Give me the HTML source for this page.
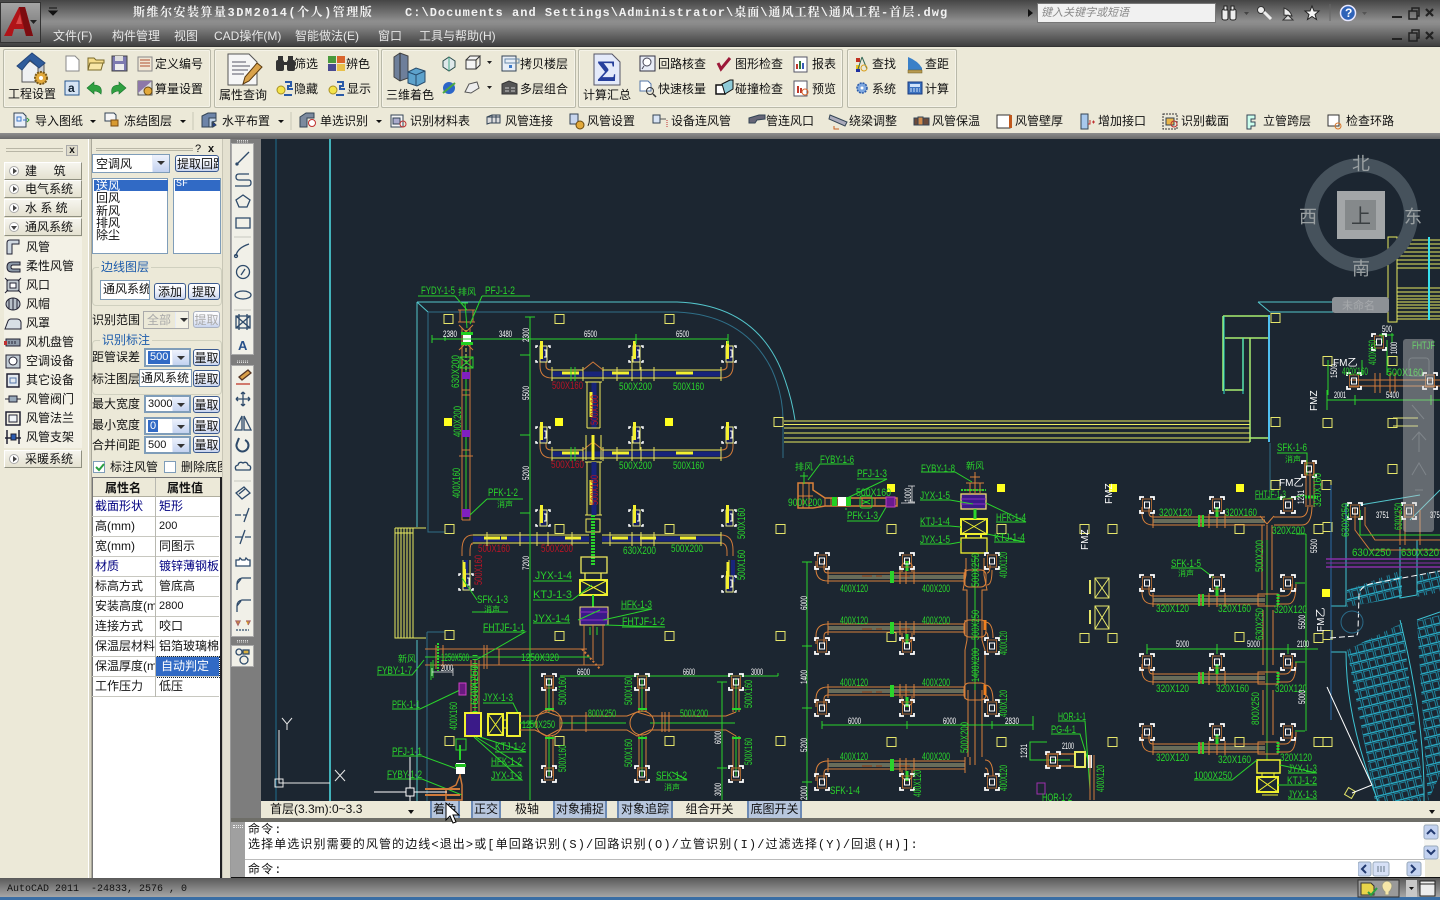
<!DOCTYPE html>
<html><head><meta charset="utf-8"><title>斯维尔安装算量</title>
<style>
html,body{margin:0;padding:0;width:1440px;height:900px;overflow:hidden;background:#ece9d8}
body{position:relative;font:12px/14px "Liberation Sans","WenQuanYi Zen Hei","Noto Sans CJK SC",sans-serif;color:#111}
div,span,i{position:absolute;display:block;box-sizing:border-box}
.t{white-space:nowrap;height:14px}
.m{color:#e6e6e6}
.p{top:49px;height:59px;border:1px solid #b9b9a9;box-shadow:inset 0 0 0 1px #f5f3e8;border-radius:2px}
.lb{left:4px;width:78px;height:18px;background:linear-gradient(#f6f5ee,#e4e1d0);border:1px solid;border-color:#fff #8f8f80 #8f8f80 #fff;padding:1px 0 0 20px;white-space:nowrap}
.lb i{left:4px;top:3px;width:10px;height:10px;border-radius:50%;background:#fff;border:1px solid #aaa}
.lb i:after{content:"";position:absolute;left:3px;top:1px;border-left:4px solid #444;border-top:3px solid transparent;border-bottom:3px solid transparent}
.lb.o i:after{left:1px;top:3px;border-top:4px solid #444;border-left:3px solid transparent;border-right:3px solid transparent;border-bottom:0}
.b{background:linear-gradient(#fff,#ebeef8 55%,#c9d4ee);border:1px solid #3b5a8f;border-radius:3px;text-align:center;overflow:hidden;white-space:nowrap;padding-top:1px}
.b.d{color:#aaa;border-color:#aab2c0}
.c{background:#fff;border:2px solid #7f9db9;overflow:hidden;white-space:nowrap;padding:0 0 0 2px;line-height:14px;font-size:11px}
.c u{position:absolute;right:0;top:0;bottom:0;width:16px;background:linear-gradient(#eef2fc,#c3d2f0);border-left:1px solid #e5ebf8;text-decoration:none}
.c u:after{content:"";position:absolute;left:4px;top:6px;border-top:4px solid #333;border-left:4px solid transparent;border-right:4px solid transparent}
.sel{background:#316ac5;color:#fff}
.gt{height:20px;border-bottom:1px solid #c8c8c0;white-space:nowrap;overflow:hidden;padding:2px 0 0 3px;left:92px;width:63px;font-size:12px}
.gv{height:20px;border-bottom:1px solid #c8c8c0;white-space:nowrap;overflow:hidden;padding:2px 0 0 3px;left:156px;width:63px;font-size:12px}
.tab{top:801px;height:17px;white-space:nowrap;text-align:center;padding-top:1px}
.tab.on{background:#b7c6dd;border-left:2px solid #6c8ab5;border-right:2px solid #6c8ab5}
svg{position:absolute;left:0;top:0;display:block}
svg text{font-family:"Liberation Sans","WenQuanYi Zen Hei","Noto Sans CJK SC",sans-serif;font-size:11px}
.g{fill:#2ad42c}.w{fill:#fff}.r{fill:#b81426}
.gc{fill:#2ad42c;font-size:9px!important}
</style></head><body>

<!-- title bar -->
<div style="left:0;top:0;width:1440px;height:47px;background:linear-gradient(#454545,#8f8f8f 45%,#8a8a8a 52%,#3c3c3c)"></div>
<div style="left:0;top:2px;width:41px;height:41px;background:linear-gradient(#a4a4a4,#6a6a6a);border:1px solid #333"></div>
<svg width="60" height="47" style="left:0;top:0"><path d="M4,36 L19,7 L25,7 L33,36 L26,36 L24,29 L14,29 L12,36Z" fill="#b01418"/><path d="M19,7L25,7 L33,36 L26,36Z" fill="#7d0c10"/><path d="M16,24L22,24L20,14Z" fill="#d84848"/><path d="M30,20h7l-3.500,4z" fill="#222"/><path d="M49,8h8M49,11h8l-4,4z" stroke="#111" fill="#111"/></svg>
<div class="t" style="left:133px;top:6px;color:#f2f2f2;font:bold 12px/15px 'Liberation Mono','Noto Serif CJK SC',monospace;letter-spacing:1.5px">斯维尔安装算量3DM2014(个人)管理版</div>
<div class="t" style="left:405px;top:6px;color:#f2f2f2;font:bold 12px/15px 'Liberation Mono','Noto Serif CJK SC',monospace;letter-spacing:1.03px">C:\Documents and Settings\Administrator\桌面\通风工程\通风工程-首层.dwg</div>
<div class="t m" style="left:53px;top:29px">文件(F)</div>
<div class="t m" style="left:112px;top:29px">构件管理</div>
<div class="t m" style="left:174px;top:29px">视图</div>
<div class="t m" style="left:214px;top:29px">CAD操作(M)</div>
<div class="t m" style="left:295px;top:29px">智能做法(E)</div>
<div class="t m" style="left:378px;top:29px">窗口</div>
<div class="t m" style="left:419px;top:29px">工具与帮助(H)</div>
<div style="left:1037px;top:3px;width:179px;height:20px;background:#f1f1f1;border:1px solid #777"></div>
<div class="t" style="left:1041px;top:6px;color:#8a8a8a;font-style:italic;font-size:11px">键入关键字或短语</div>

<svg width="1440" height="47"><g>
<path d="M1028,9l5,4l-5,4z" fill="#111"/>
<g fill="#eee" stroke="#222"><rect x="1222" y="9" width="6" height="11" rx="2"/><rect x="1230" y="9" width="6" height="11" rx="2"/><rect x="1224" y="6" width="3" height="4"/><rect x="1231" y="6" width="3" height="4"/></g>
<path d="M1244,12h5l-2.500,3z" fill="#444"/>
<circle cx="1261" cy="10" r="3.500" fill="#eee" stroke="#333"/><path d="M1264,12l7,7" stroke="#eee" stroke-width="3"/>
<path d="M1284,8q6,2 8,8l-8,-1z" fill="#eee" stroke="#333"/><path d="M1283,20h10l-5,-5z" fill="#ddd" stroke="#333"/>
<path d="M1312,6l2,5h5l-4,3.500 1.500,5 -4.500,-3 -4.500,3 1.500,-5 -4,-3.500h5z" fill="#f4f4f4" stroke="#222"/>
<path d="M1330,4v17" stroke="#666"/>
<circle cx="1348" cy="13" r="7.500" fill="#2f63b8" stroke="#e8e8ff" stroke-width="1.500"/>
<text x="1345" y="17" fill="#fff" style="font-size:12px;font-weight:bold">?</text>
<path d="M1362,12h5l-2.500,3z" fill="#555"/>
<g stroke="#222" fill="none" stroke-width="1.500"><path d="M1392,17h10" stroke-width="2"/><path d="M1409,11h8v8h-8zM1412,11v-3h7v8h-2"/><path d="M1426,9l7,7M1433,9l-7,7" stroke-width="2.200"/>
<path d="M1392,39h10" stroke-width="2"/><path d="M1409,33h8v8h-8zM1412,33v-3h7v8h-2"/><path d="M1426,32l7,7M1433,32l-7,7" stroke-width="2.200"/></g>
</g></svg>

<!-- ribbon -->
<div style="left:0;top:47px;width:1440px;height:86px;background:#ece9d8"></div>
<div style="left:0;top:46px;width:1440px;height:1px;background:#333"></div>
<div class="p" style="left:3px;width:208px"></div>
<div class="p" style="left:214px;width:165px"></div>
<div class="p" style="left:381px;width:195px"></div>
<div class="p" style="left:578px;width:265px"></div>
<div class="p" style="left:847px;width:110px"></div>
<div style="left:0;top:133px;width:1440px;height:6px;background:linear-gradient(#8e8e8e,#6a6a6a)"></div>

<div class="t" style="left:8px;top:87px">工程设置</div>
<div class="t" style="left:155px;top:57px">定义编号</div>
<div class="t" style="left:155px;top:82px">算量设置</div>
<div class="t" style="left:219px;top:88px">属性查询</div>
<div class="t" style="left:294px;top:57px">筛选</div>
<div class="t" style="left:346px;top:57px">辨色</div>
<div class="t" style="left:294px;top:82px">隐藏</div>
<div class="t" style="left:347px;top:82px">显示</div>
<div class="t" style="left:386px;top:88px">三维着色</div>
<div class="t" style="left:520px;top:57px">拷贝楼层</div>
<div class="t" style="left:520px;top:82px">多层组合</div>
<div class="t" style="left:583px;top:88px">计算汇总</div>
<div class="t" style="left:658px;top:57px">回路核查</div>
<div class="t" style="left:658px;top:82px">快速核量</div>
<div class="t" style="left:735px;top:57px">图形检查</div>
<div class="t" style="left:735px;top:82px">碰撞检查</div>
<div class="t" style="left:812px;top:57px">报表</div>
<div class="t" style="left:812px;top:82px">预览</div>
<div class="t" style="left:872px;top:57px">查找</div>
<div class="t" style="left:925px;top:57px">查距</div>
<div class="t" style="left:872px;top:82px">系统</div>
<div class="t" style="left:925px;top:82px">计算</div>

<div class="t" style="left:35px;top:114px">导入图纸</div>
<div class="t" style="left:124px;top:114px">冻结图层</div>
<div class="t" style="left:222px;top:114px">水平布置</div>
<div class="t" style="left:320px;top:114px">单选识别</div>
<div class="t" style="left:410px;top:114px">识别材料表</div>
<div class="t" style="left:505px;top:114px">风管连接</div>
<div class="t" style="left:587px;top:114px">风管设置</div>
<div class="t" style="left:671px;top:114px">设备连风管</div>
<div class="t" style="left:766px;top:114px">管连风口</div>
<div class="t" style="left:849px;top:114px">绕梁调整</div>
<div class="t" style="left:932px;top:114px">风管保温</div>
<div class="t" style="left:1015px;top:114px">风管壁厚</div>
<div class="t" style="left:1098px;top:114px">增加接口</div>
<div class="t" style="left:1181px;top:114px">识别截面</div>
<div class="t" style="left:1263px;top:114px">立管跨层</div>
<div class="t" style="left:1346px;top:114px">检查环路</div>

<svg width="1440" height="139" style="top:0">
<!-- house -->
<path d="M22,68L30,61L38,67V82H22Z" fill="#eef0f2" stroke="#555"/><path d="M38,67L44,63V78L38,82Z" fill="#c8ccd2" stroke="#555"/><path d="M17,66L32,53L45,63L39,68L30,60L22,70Z" fill="#2f5c9c" stroke="#24467a"/><circle cx="41" cy="78" r="6" fill="#e2a93a" stroke="#7a5a1a" stroke-width="2" stroke-dasharray="2 1"/><circle cx="41" cy="78" r="2" fill="#fff"/>
<!-- small -->
<path d="M66,56h9l4,4v11h-13z" fill="#fff" stroke="#888"/>
<path d="M88,58h6l2,2h8v3h-14l-2,7v-12z" fill="#f5dc8a" stroke="#7a6a2a"/><path d="M90,63h13l-2,7h-13z" fill="#f8e6a6" stroke="#7a6a2a"/>
<rect x="112" y="56" width="15" height="15" fill="#7d7ab0" stroke="#444"/><rect x="115" y="56" width="8" height="5" fill="#ddd"/><rect x="115" y="64" width="9" height="6" fill="#eee"/>
<rect x="138" y="57" width="14" height="14" fill="#f0e6d4" stroke="#888"/><path d="M140,60h10M140,63h10M140,66h10" stroke="#b05030"/>
<rect x="65" y="81" width="14" height="14" fill="#d6e4f4" stroke="#27578f"/><text x="68" y="92" fill="#123" style="font-size:12px;font-weight:bold">a</text>
<path d="M101,94q2,-9 -7,-9v-3l-7,6 7,6v-3q4,0 7,3z" fill="#2fa040" stroke="#14702a" stroke-width=".6"/>
<path d="M112,94q-2,-9 7,-9v-3l7,6 -7,6v-3q-4,0 -7,3z" fill="#2fa040" stroke="#14702a" stroke-width=".6"/>
<rect x="138" y="81" width="14" height="14" fill="#ddd" stroke="#555"/><path d="M138,81h14l-14,12z" fill="#8d78a8"/><circle cx="148" cy="91" r="4" fill="#e2a93a" stroke="#6a4a10"/>
<!-- prop doc -->
<path d="M228,54h21l8,8v23h-29z" fill="#f6f6f6" stroke="#555"/><path d="M232,62h14M232,66h18M232,70h16M232,74h12" stroke="#556"/><path d="M243,84l2,-7 12,-14 5,4 -13,14z" fill="#d9a24a" stroke="#5a3a10"/>
<!-- binoc etc -->
<g fill="#333"><rect x="276" y="60" width="8" height="11" rx="2"/><rect x="287" y="60" width="8" height="11" rx="2"/><rect x="278" y="56" width="5" height="5"/><rect x="288" y="56" width="5" height="5"/><rect x="283" y="62" width="5" height="3"/></g>
<rect x="328" y="56" width="8" height="7" fill="#4a9a3c"/><rect x="337" y="56" width="8" height="7" fill="#d9652c"/><rect x="328" y="64" width="8" height="7" fill="#4a4a90"/><rect x="337" y="64" width="8" height="7" fill="#e8c04a"/>
<g id="bu"><circle cx="281" cy="90" r="4" fill="#f3e34a" stroke="#a89020"/><path d="M285,82h6v4h-3v3h5M284,95h8" stroke="#2a5aa8" stroke-width="2" fill="none"/></g>
<use href="#bu" x="52"/>
<!-- 3d -->
<path d="M394,57l6,-4 8,3v22l-8,3 -6,-4z" fill="#6e7f9a" stroke="#444"/><path d="M400,53v28" stroke="#333"/><path d="M408,72l8,-4 9,3v11l-8,4 -9,-3z" fill="#5da2cc" stroke="#264a6a"/><path d="M416,75v11M408,72l8,3 9,-4" stroke="#264a6a" fill="none"/>
<path d="M449,57l6,4v6l-6,4 -6,-4v-6z" fill="#dfe8ea" stroke="#2a4a4a"/><path d="M449,57v14" stroke="#4a8"/>
<path d="M466,60h10v9h-10zM466,60l4,-4h10l-4,4M476,69l4,-4v-9" fill="#f4f4f4" stroke="#333"/>
<path d="M487,61h5l-2.500,3zM487,86h5l-2.500,3z" fill="#222"/>
<circle cx="449" cy="88" r="6" fill="#2c66c8"/><path d="M443,93l12,-10" stroke="#4ca840" stroke-width="2"/>
<path d="M465,92l4,-8 8,-2 2,6 -8,5z" fill="#eee" stroke="#555"/>
<rect x="502" y="56" width="14" height="15" fill="#e8eef6" stroke="#345"/><rect x="505" y="59" width="14" height="4" fill="none" stroke="#68a"/><rect x="509" y="65" width="3" height="3" fill="#3a78c8"/>
<path d="M502,84l7,-3 8,3v10h-15z" fill="#555" stroke="#333"/><path d="M505,88h4M511,88h4M505,91h4M511,91h4" stroke="#ccc"/>
<!-- sigma -->
<path d="M594,54h18l8,8v23h-26z" fill="#e4eafa" stroke="#556"/><text x="597" y="81" fill="#263f9c" style="font-size:30px;font-weight:bold;font-family:'Liberation Serif',serif">Σ</text>
<rect x="640" y="56" width="15" height="15" fill="#e8ecf6" stroke="#334"/><circle cx="647" cy="62" r="4" fill="#fff" stroke="#445"/><path d="M644,66l-2,3" stroke="#445"/>
<path d="M640,81h8l3,3v7h-11z" fill="#fff" stroke="#57a"/><circle cx="650" cy="91" r="3.500" fill="none" stroke="#333"/><path d="M653,94l3,3" stroke="#333" stroke-width="1.500"/>
<path d="M718,63l3,6 9,-11" fill="none" stroke="#9c1838" stroke-width="3"/>
<path d="M716,85h9v9h-9z" fill="#fff" stroke="#111" stroke-width="1.500"/><path d="M722,84l8,-4h3v9l-8,5z" fill="#8ecbd8" stroke="#111"/>
<path d="M794,57h13v15h-13z" fill="#fff" stroke="#556"/><path d="M797,69v-5M800,69v-8M803,69v-6" stroke-width="2" stroke="#c0392b"/><path d="M800,69v-8" stroke="#2e7a3c" stroke-width="2"/><path d="M803,69v-6" stroke="#3a5cb8" stroke-width="2"/>
<path d="M794,81h13v15h-13z" fill="#fff" stroke="#556"/><path d="M798,93v-7M801,93v-5" stroke="#c0392b" stroke-width="2"/><circle cx="805" cy="92" r="3" fill="none" stroke="#d9652c"/>
<!-- find -->
<path d="M856,58h4v4h-4z" fill="#c03020"/><path d="M856,65h4v4h-4z" fill="#e8c020"/><path d="M856,69h4v3h-4z" fill="#2030a0"/><path d="M862,57l5,12M862,57l-4,12" stroke="#365" fill="none"/><circle cx="864" cy="68" r="3" fill="none" stroke="#d9a020"/>
<path d="M908,57q10,4 14,11v2h-14z" fill="#3a80c8"/><rect x="908" y="70" width="14" height="3" fill="#b89a50" stroke="#6a5a20" stroke-width=".5"/>
<circle cx="862" cy="88" r="5" fill="#7da7e0" stroke="#2a5aa8" stroke-width="1.500" stroke-dasharray="2 1"/><circle cx="862" cy="88" r="1.500" fill="#fff"/>
<rect x="908" y="82" width="14" height="12" fill="#3b72c0" stroke="#1a3a80"/><rect x="910" y="84" width="10" height="3" fill="#cfe2fa"/><path d="M910,89h10M910,91h10" stroke="#cfe2fa" stroke-dasharray="2 1"/>
<!-- toolbar icons -->
<g fill="none" stroke="#345">
<path d="M14,113h9l3,3v11h-12z" fill="#e8eef8"/><path d="M17,117h4v4h-4zM23,120h4" stroke="#3a78c8"/><path d="M27,118l2,2 -2,2" stroke="#2a9a3c"/>
<path d="M105,113h9l2,2v6h-11z" fill="#f6f6f6"/><rect x="111" y="120" width="7" height="6" fill="#d89a30" stroke="#7a4a10"/>
<path d="M202,116l6,-3h8v5h-7v9h-7z" fill="#6d84a8"/><path d="M209,118h7v3l-4,1 0,5h-3z" fill="#c0d2e8"/><path d="M216,125l-3,-3v5z" fill="#1a3ab0"/>
<path d="M300,117l6,-4h8v5h-7v9h-7z" fill="#7c8a9e"/><circle cx="312" cy="123" r="3.500" fill="#fff" stroke="#c03030"/>
<path d="M391,115h12v12h-12z" fill="#f5f5f5"/><path d="M393,118h7v6h-7z" fill="#aac" /><circle cx="403" cy="124" r="3" fill="none" stroke="#c03030"/>
<path d="M487,117l5,-2h8v8h-10l-3,1z" fill="#ddd"/><path d="M492,115v8M496,115v8M487,117h13" />
<path d="M570,114h8v10h-8z" fill="#c8d6ee"/><circle cx="580" cy="125" r="4" fill="#e2a93a" stroke="#6a4a10"/>
<path d="M653,115h7v8h-7z" fill="#d8e4f4"/><path d="M660,119h6" stroke="#555"/><path d="M667,120v8" stroke="#c03030" stroke-dasharray="1 1"/>
<path d="M749,118l10,-3h6v4l-8,1 -2,3 -6,0z" fill="#667"/>
<path d="M830,115l17,7-2,4 -16,-7z" fill="#aab"/><path d="M834,126v3h5" stroke="#c86020"/>
<path d="M914,118h15v7h-15z" fill="#6b4a3a"/><rect x="918" y="117" width="5" height="8" fill="#d08a4a"/>
<rect x="997" y="115" width="13" height="13" fill="#fff" stroke="#333"/><rect x="1009" y="115" width="3" height="13" fill="#c0581c" stroke="none"/>
<rect x="1081" y="114" width="7" height="15" fill="#a8c8ec"/><path d="M1090,120v4h-2M1092,122h3M1093.500,120.500v3" stroke="#c03030"/>
<rect x="1163" y="114" width="14" height="15" stroke-dasharray="2 1" stroke="#333"/><rect x="1166" y="118" width="8" height="7" fill="#e8b64a"/><circle cx="1174" cy="124" r="3" stroke="#c03030"/>
<path d="M1247,115h8v4h-4v3h4v4h-4v3h-4z" fill="#cfe"/>
<rect x="1328" y="115" width="11" height="11" fill="#fff" stroke="#333"/><circle cx="1338" cy="126" r="3" stroke="#d9782c"/>
</g>
<path d="M90,120h6l-3,3zM180,120h6l-3,3zM278,120h6l-3,3zM376,120h6l-3,3z" fill="#111"/>
<path d="M193,112v18M291,112v18" stroke="#c8c6b6"/>
</svg>

<!-- left panel -->
<div style="left:0;top:139px;width:88px;height:739px;background:#ece9d8"></div>
<div style="left:88px;top:139px;width:4px;height:739px;background:#d8d5c4;border-left:1px solid #fff;border-right:1px solid #aaa89a"></div>
<div style="left:6px;top:148px;width:57px;height:1px;background:#b8b6a6;box-shadow:0 3px 0 #b8b6a6"></div>
<div style="left:66px;top:145px;width:12px;height:11px;background:#dfdccc;border:1px solid #aaa;font:bold 10px/9px 'Liberation Sans';text-align:center">x</div>
<div class="lb" style="top:162px"><i></i>建 &nbsp; &nbsp; 筑</div>
<div class="lb" style="top:180px"><i></i>电气系统</div>
<div class="lb" style="top:199px"><i></i>水 系 统</div>
<div class="lb o" style="top:218px"><i></i>通风系统</div>
<div style="left:4px;top:237px;width:78px;height:211px;background:#f3f1e6"></div>
<div class="t" style="left:26px;top:240px">风管</div>
<div class="t" style="left:26px;top:259px">柔性风管</div>
<div class="t" style="left:26px;top:278px">风口</div>
<div class="t" style="left:26px;top:297px">风帽</div>
<div class="t" style="left:26px;top:316px">风罩</div>
<div class="t" style="left:26px;top:335px">风机盘管</div>
<div class="t" style="left:26px;top:354px">空调设备</div>
<div class="t" style="left:26px;top:373px">其它设备</div>
<div class="t" style="left:26px;top:392px">风管阀门</div>
<div class="t" style="left:26px;top:411px">风管法兰</div>
<div class="t" style="left:26px;top:430px">风管支架</div>
<div class="lb" style="top:450px"><i></i>采暖系统</div>
<svg width="30" height="460" style="left:0;top:0"><g fill="none" stroke="#223">
<path d="M7,254v-11q0,-3 3,-3h9v4h-7v10z" fill="#cfd8e0"/>
<path d="M20,262h-8q-5,0 -5,5t5,5h8v-3h-7q-2,0 -2,-2t2,-2h7z" fill="#8d9aa8"/>
<rect x="7" y="280" width="12" height="11" fill="#c4ccd2"/><rect x="10" y="283" width="6" height="5" fill="#fff"/><path d="M5,278l3,3M21,278l-3,3M5,293l3,-3M21,293l-3,-3"/>
<ellipse cx="13" cy="304" rx="7" ry="6" fill="#b8c0c8"/><path d="M9,299v10M13,298v12M17,299v10"/>
<path d="M5,329l3,-8q1,-2 3,-2h6q3,0 4,3v7z" fill="#d8dfe6"/>
<rect x="6" y="339" width="14" height="7" fill="#8e9aa8"/><path d="M9,341v3M12,341v3M15,341v3"/><rect x="4" y="341" width="3" height="4" fill="#c03030" stroke="none"/>
<rect x="6" y="355" width="14" height="13" fill="#c4ced6"/><circle cx="13" cy="361" r="4" fill="#fff"/>
<rect x="7" y="374" width="12" height="13" fill="#e4eaf0" stroke-width="1.500"/><rect x="10" y="378" width="6" height="5" stroke="#57a"/>
<path d="M5,399h4M17,399h4"/><rect x="9" y="396" width="8" height="6" fill="#9ab"/>
<rect x="6" y="412" width="14" height="13" stroke-width="1.500"/><rect x="9" y="415" width="8" height="7" fill="#f0f4f8"/>
<path d="M7,430v14M19,430v14M5,438h16" stroke-width="1.500"/><rect x="11" y="434" width="5" height="6" fill="#2a5ab0"/>
</g></svg>

<!-- property panel -->
<div style="left:92px;top:139px;width:130px;height:739px;background:#ece9d8"></div>
<div style="left:222px;top:139px;width:9px;height:739px;background:#e4e1d0;border-left:1px solid #c8c6b6;border-right:1px solid #999"></div>
<div style="left:96px;top:148px;width:97px;height:1px;background:#b8b6a6;box-shadow:0 2px 0 #b8b6a6"></div>
<div class="t" style="left:195px;top:142px;font-size:11px">?</div>
<div class="t" style="left:208px;top:142px;font:bold 11px/14px 'Liberation Sans'">x</div>

<div class="c" style="left:92px;top:154px;width:78px;height:19px;border-width:1px;font-size:12px;padding:2px 0 0 3px">空调风<u style="width:16px"></u></div>
<div class="b" style="left:175px;top:155px;width:44px;height:17px;text-align:left;padding-left:1px">提取回路</div>
<div style="left:92px;top:178px;width:76px;height:76px;background:#fff;border:1px solid #7f9db9"></div>
<div class="sel" style="left:94px;top:180px;width:74px;height:11px"></div>
<div class="t" style="left:96px;top:179px;color:#fff">送风</div>
<div class="t" style="left:96px;top:191px">回风</div>
<div class="t" style="left:96px;top:204px">新风</div>
<div class="t" style="left:96px;top:216px">排风</div>
<div class="t" style="left:96px;top:228px">除尘</div>
<div style="left:173px;top:178px;width:48px;height:76px;background:#fff;border:1px solid #7f9db9"></div>
<div class="sel" style="left:175px;top:180px;width:45px;height:11px"></div>
<div class="t" style="left:176px;top:179px;color:#fff;font:10px/12px 'Liberation Mono'">SF</div>

<div style="left:92px;top:267px;width:130px;height:39px;border:1px solid #d0d0bf;border-radius:4px"></div>
<div class="t" style="left:99px;top:260px;background:#ece9d8;color:#1d5cab;padding:0 2px">边线图层</div>
<div class="c" style="left:100px;top:280px;width:50px;height:20px;font-size:12px;padding:1px 0 0 2px;border-color:#7f9db9;border-width:1px">通风系统</div>
<div class="b" style="left:154px;top:283px;width:32px;height:17px">添加</div>
<div class="b" style="left:188px;top:283px;width:32px;height:17px">提取</div>

<div class="t" style="left:92px;top:313px">识别范围</div>
<div class="c" style="left:143px;top:311px;width:46px;height:18px;color:#aaa;border:1px solid #aaa;font-size:12px;padding:1px 0 0 3px;background:#ece9d8">全部<u style="width:12px;background:#f4f2e6"></u></div>
<div class="b d" style="left:193px;top:311px;width:27px;height:17px">提取</div>

<div style="left:92px;top:340px;width:130px;height:55px;border:1px solid #d0d0bf;border-radius:4px"></div>
<div class="t" style="left:100px;top:333px;background:#ece9d8;color:#1d5cab;padding:0 2px">识别标注</div>
<div class="t" style="left:92px;top:350px">距管误差</div>
<div class="c" style="left:144px;top:348px;width:47px;height:19px"><span style="left:2px;top:1px;background:#316ac5;color:#fff;padding:0 2px;height:13px;line-height:13px">500</span><u></u></div>
<div class="b" style="left:193px;top:349px;width:27px;height:17px">量取</div>
<div class="t" style="left:92px;top:372px">标注图层</div>
<div class="c" style="left:139px;top:369px;width:53px;height:18px;border-width:1px;font-size:12px;padding:1px 0 0 1px">通风系统</div>
<div class="b" style="left:193px;top:370px;width:27px;height:17px">提取</div>
<div class="t" style="left:92px;top:397px">最大宽度</div>
<div class="c" style="left:144px;top:395px;width:47px;height:18px">3000<u></u></div>
<div class="b" style="left:193px;top:396px;width:27px;height:17px">量取</div>
<div class="t" style="left:92px;top:418px">最小宽度</div>
<div class="c" style="left:144px;top:417px;width:47px;height:18px"><span style="left:2px;top:1px;background:#316ac5;color:#fff;padding:0 2px;height:12px;line-height:12px">0</span><u></u></div>
<div class="b" style="left:193px;top:417px;width:27px;height:17px">量取</div>
<div class="t" style="left:92px;top:438px">合并间距</div>
<div class="c" style="left:144px;top:436px;width:47px;height:18px">500<u></u></div>
<div class="b" style="left:193px;top:436px;width:27px;height:17px">量取</div>
<div style="left:93px;top:461px;width:12px;height:12px;background:#fff;border:1px solid #7f9db9"></div>
<svg width="14" height="14" style="left:93px;top:460px"><path d="M3,7l3,3 5,-6" fill="none" stroke="#2aa040" stroke-width="2"/></svg>
<div class="t" style="left:110px;top:460px">标注风管</div>
<div style="left:164px;top:461px;width:12px;height:12px;background:#fff;border:1px solid #7f9db9"></div>
<div class="t" style="left:181px;top:460px;width:41px;overflow:hidden">删除底图</div>

<!-- grid -->
<div style="left:92px;top:477px;width:130px;height:401px;background:#fff;border:1px solid #777;border-width:1px 0 0 1px"></div>
<div style="left:220px;top:477px;width:2px;height:401px;background:#222"></div>
<div style="left:93px;top:478px;width:127px;height:19px;background:#ece9d8;border-bottom:1px solid #b0ae9e"></div>
<div class="t" style="left:105px;top:481px;font-weight:bold">属性名</div>
<div class="t" style="left:167px;top:481px;font-weight:bold">属性值</div>
<div class="gt" style="top:497px;color:#000080">截面形状</div><div class="gv" style="top:497px;color:#000080">矩形</div>
<div class="gt" style="top:517px">高(mm)</div><div class="gv" style="top:517px;font-size:11px">200</div>
<div class="gt" style="top:537px">宽(mm)</div><div class="gv" style="top:537px">同图示</div>
<div class="gt" style="top:557px;color:#000080">材质</div><div class="gv" style="top:557px;color:#000080">镀锌薄钢板</div>
<div class="gt" style="top:577px">标高方式</div><div class="gv" style="top:577px">管底高</div>
<div class="gt" style="top:597px">安装高度(mm)</div><div class="gv" style="top:597px;font-size:11px">2800</div>
<div class="gt" style="top:617px">连接方式</div><div class="gv" style="top:617px">咬口</div>
<div class="gt" style="top:637px">保温层材料</div><div class="gv" style="top:637px">铝箔玻璃棉</div>
<div class="gt" style="top:657px">保温厚度(mm)</div><div class="gv sel" style="top:657px;padding-left:5px;outline:1px dotted #123">自动判定</div>
<div class="gt" style="top:677px">工作压力</div><div class="gv" style="top:677px">低压</div>
<div style="left:155px;top:478px;width:1px;height:219px;background:#b8b8b0"></div>

<!-- grey columns & vertical toolbar -->
<div style="left:231px;top:139px;width:30px;height:684px;background:#7d7d7d"></div>
<div style="left:231px;top:143px;width:23px;height:212px;background:#f1f0e8;border:1px solid #aaa"></div>
<div style="left:231px;top:365px;width:23px;height:272px;background:#f1f0e8;border:1px solid #aaa"></div>
<div style="left:231px;top:645px;width:23px;height:22px;background:#f1f0e8;border:1px solid #aaa"></div>
<svg width="30" height="680" style="left:231px;top:0">
<path d="M6,140.500h11M6,142h11M6,361h11M6,362.500h11M6,640.500h11M6,642h11" stroke="#ddd" stroke-dasharray="1 1"/>
<path d="M3,237h17M3,310h17M3,481h17" stroke="#c8c8c0"/>
<g fill="none" stroke="#2e4a6a" stroke-width="1.300">
<path d="M6,164l12,-12"/><circle cx="6" cy="164" r="1" fill="#2e4a6a"/>
<path d="M18,174h-10q-3,0 -3,3t3,3h10q2,0 2,3t-3,3h-13"/>
<path d="M12,195l7,5 -3,7h-8l-3,-7z"/>
<path d="M5,218h14v10h-14z"/>
<path d="M5,256q1,-8 13,-12"/><circle cx="5" cy="256" r="1.500"/>
<circle cx="12" cy="272" r="6.500"/><path d="M10,275l4,-6"/>
<ellipse cx="12" cy="295" rx="8" ry="4"/>
<path d="M5,316h14v12h-14zM5,316l14,12M19,316l-14,12M8,314v16M16,314v16"/>
<path d="M8,377l9,-7 3,3 -9,7z" fill="#d9a04a" stroke="#532"/><path d="M5,384h14" stroke="#c0392b"/>
<path d="M12,392v14M5,399h14M12,392l-2,2M12,392l2,2M12,406l-2,-2M12,406l2,-2M5,399l2,-2M5,399l2,2M19,399l-2,-2M19,399l-2,2"/>
<path d="M11,416v14h-7zM13,416v14h7z"/>
<path d="M8,438l-2,5a6,6 0 1,0 8,-3" stroke-width="2"/>
<path d="M5,470h14q2,-4 -2,-5q-1,-4 -5,-2q-4,-2 -5,2q-4,1 -2,5z" />
<path d="M5,493l8,-6 6,6 -8,6z M8,494l6,-5"/>
<path d="M4,515h6M12,515h3M18,508l-5,14"/>
<path d="M4,537h7M14,537h6M14,530l-5,14"/>
<path d="M5,566v-6h3l1,-2 2,2h3l1,-2 2,2h2v6z" fill="#fff"/>
<path d="M6,590v-6q0,-5 5,-6h9M6,584l4,-5"/>
<path d="M6,612v-6q0,-5 5,-6h9M6,606l4,-5"/>
<path d="M5,621h4l-2,4zM15,621h4l-2,4" fill="#d9a020" stroke="#a66"/><path d="M5,630h13" stroke-dasharray="2 1"/>
<circle cx="8" cy="652" r="3"/><rect x="12" y="650" width="6" height="4" fill="#d9b040"/><circle cx="13" cy="660" r="4"/>
</g>
<text x="7" y="350" fill="#27508a" style="font-size:13px;font-weight:bold">A</text>
</svg>

<!-- CAD canvas -->
<svg width="1440" height="900" viewBox="0 0 1440 900">
<defs>
<clipPath id="cv"><rect x="261" y="139" width="1179" height="662"/></clipPath>
<rect id="o" x="-4" y="-4.500" width="9" height="9" fill="none" stroke="#e6e66a"/>
<rect id="f" x="-4" y="-4" width="8" height="8" fill="#ffff20"/>
<g id="ty"><path d="M-7,-6v-2h2M7,-6v-2h-2M-7,6v2h2M7,6v2h-2" stroke="#fff" stroke-width="1.500" fill="none"/><rect x="-3" y="-8" width="7" height="16" fill="#182060" stroke="#ee8"/><rect x="-3" y="-13" width="3" height="18" fill="#f4f030"/><path d="M1,-4h2v7h-2" stroke="#fff" fill="none"/></g>
<g id="tw"><rect x="-4.500" y="-6" width="9" height="12" fill="none" stroke="#c87838" stroke-width=".8"/><path d="M-7,-5v-3h4M7,-5v-3h-4M-7,5v3h4M7,5v3h-4" stroke="#fff" stroke-width="1.800" fill="none"/><rect x="-2.500" y="-3" width="5" height="6" fill="none" stroke="#fff"/></g>
<pattern id="s" width="8" height="9" patternUnits="userSpaceOnUse" patternTransform="rotate(-14)"><rect x=".5" y=".5" width="6" height="7" fill="none" stroke="#1f8ba5" stroke-width=".9"/><path d="M0,8h8" stroke="#2cb0c8"/></pattern>
<!-- net A row -->
<g id="ra"><path d="M552,0H721" stroke="#18247a" stroke-width="5"/><path d="M552,-4H583M602,-4H721M552,4H721" stroke="#efea5c" fill="none"/><path d="M540,-14V-8Q540,4 552,4M546,-14V-8Q546,-4 552,-4M733,-14V-8Q733,4 721,4M727,-14V-8Q727,-4 721,-4" stroke="#d07a3a" fill="none"/><path d="M562,-1h17M612,-1h17M676,-1h17" stroke="#f4f030" stroke-width="3"/><path d="M552,-7v14M583,-7v14M603,-7v14M617,-7v14M632,-7v14M641,-7v14M654,-7v14M721,-7v14" stroke="#e8e060"/><path d="M632,-18V-4M640,-18V-4" stroke="#e8e060"/><path d="M583,-4l10,-8 10,8" stroke="#d07a3a" fill="none"/><path d="M571,-7v14M575,-7v14" stroke="#2ad42c"/></g>
<!-- net D row (origin main row y) -->
<g id="rd" fill="none"><path d="M6,-4H143M6,4H143M-6,-16V-8Q-6,4 6,4M2,-16V-8Q2,-4 6,-4" stroke="#d9803a"/><path d="M6,-1H143M6,1H143" stroke="#e8e0a0" stroke-width=".8"/><path d="M6,-7v14M40,-1h10M54,-1h6M78,-1h10" stroke="#d9803a"/><path d="M69,-6v12M71,-6v12" stroke="#2ad42c" stroke-width="2"/><path d="M78,-7v14M84,-7v14M92,-7v14M80,-5V-12L84,-16M90,-5V-12L86,-16" stroke="#d9803a"/><path d="M85,-16v10" stroke="#2ad42c" stroke-width="3"/><path d="M143,-8v16" stroke="#d9803a"/></g>
<g id="re" fill="none"><path d="M6,-4H118M6,4H118M-5,-14V-8Q-5,4 6,4M2,-14V-8Q2,-4 6,-4" stroke="#d9803a"/><path d="M6,-1H118M6,1H118" stroke="#e8e0a0" stroke-width=".8"/><path d="M6,-7v14M54,-6v12M62,-7v14M70,-7v14M78,-7v14" stroke="#d9803a"/><path d="M52,-6v12M56,-6v12" stroke="#2ad42c" stroke-width="2"/><path d="M70,-14v10" stroke="#2ad42c" stroke-width="3"/></g>
</defs>
<g clip-path="url(#cv)">
<rect x="261" y="139" width="1179" height="662" fill="#1c2631"/>
<!-- frame lines -->
<path d="M276,139V801" stroke="#1e6f8f"/>
<path d="M330,139V801" stroke="#4fe0e8" stroke-width="1.500"/>
<!-- UCS -->
<g stroke="#e8e8e8" fill="none"><path d="M279,730V783H330"/><rect x="275" y="779" width="8" height="8"/><path d="M282,718l5,6 5,-6M287,724v6M335,770l10,11M345,770l-10,11"/></g>
<!-- walls -->
<g fill="none">
<path d="M417,302H677Q760,305 785,380Q792,400 795,420" stroke="#54c6cc"/>
<path d="M428,312H677Q745,315 772,370Q783,395 783,420V458" stroke="#2f6f88"/>
<path d="M417,302V527M417,640V801M417,302L428,312" stroke="#54c6cc"/>
<path d="M428,312V532H445M427,632V801M427,632H445" stroke="#2f6f88"/>
<path d="M1258,302H1340M1270,312H1340M1258,302L1270,312" stroke="#54c6cc"/>
<path d="M1269,315V442" stroke="#4fc0f0" stroke-width="2"/>
<path d="M1223,316H1268M1223,316V391M1243,338V391M1250,338V442M1225,338H1268M1225,390H1243M1250,438H1268" stroke="#a8ee70" stroke-width="1.500"/>
<path d="M1224,316V394M1243,338V394" stroke="#2fe0d0" stroke-width="1"/>
<path d="M1270,443V490" stroke="#2f6f88"/>
<path d="M784,421H1250M784,424.500H1250M784,428H1250M784,433H1250M784,438H1250M784,442H1250" stroke="#e8ea60"/>
<!-- left stair -->
<path d="M395,528V638H426M398,528V638M401,528V638M404,528V638M407,528V638M410,528V638M413,528V638M395,528H426M395,533H413" stroke="#e8ea60"/>
<!-- right hatch -->
<path d="M1388,237V322H1397V237ZM1397,240H1440M1397,244H1440M1397,248H1440M1397,252H1440M1397,256H1440M1397,260H1440M1397,264H1440M1397,268H1440M1397,288H1440M1397,292H1440M1397,296H1440M1397,299H1440M1397,302H1440M1397,305H1440M1397,308H1440M1397,312H1440M1397,316H1440M1397,319H1440" stroke="#e8ea60"/>
<path d="M1429,237V320" stroke="#36e0ee" stroke-width="2"/>
</g>
<!-- columns -->
<g>
<use href="#o" x="448" y="319"/><use href="#o" x="559" y="319"/><use href="#o" x="669" y="319"/>
<use href="#f" x="448" y="422"/><use href="#f" x="559" y="422"/><use href="#f" x="669" y="422"/>
<use href="#o" x="778" y="422"/><use href="#o" x="449" y="529"/><use href="#o" x="559" y="529"/><use href="#o" x="669" y="529"/><use href="#o" x="780" y="529"/>
<use href="#o" x="449" y="635"/><use href="#o" x="559" y="636"/><use href="#o" x="669" y="636"/><use href="#o" x="780" y="636"/>
<use href="#o" x="449" y="741"/><use href="#o" x="559" y="741"/><use href="#o" x="669" y="741"/><use href="#o" x="780" y="741"/>
<use href="#o" x="891" y="529"/><use href="#o" x="1001" y="529"/><use href="#o" x="1084" y="529"/><use href="#o" x="891" y="637"/><use href="#o" x="1084" y="638"/><use href="#o" x="891" y="742"/><use href="#o" x="1001" y="742"/>
<use href="#f" x="891" y="488"/><use href="#f" x="1001" y="488"/><use href="#f" x="1113" y="488"/><use href="#f" x="1240" y="488"/><use href="#f" x="1326" y="593"/>
<use href="#o" x="1275" y="318"/><use href="#o" x="1275" y="422"/><use href="#o" x="1327" y="361"/><use href="#o" x="1327" y="423"/><use href="#o" x="1392" y="361"/><use href="#o" x="1392" y="423"/><use href="#o" x="1392" y="469"/><use href="#o" x="1275" y="485"/><use href="#o" x="1326" y="485"/>
<use href="#o" x="1112" y="529"/><use href="#o" x="1239" y="529"/><use href="#o" x="1318" y="529"/><use href="#o" x="1327" y="527"/>
<use href="#o" x="1112" y="638"/><use href="#o" x="1239" y="637"/><use href="#o" x="1318" y="638"/><use href="#o" x="1327" y="635"/>
<use href="#o" x="1112" y="742"/><use href="#o" x="1239" y="742"/><use href="#o" x="1318" y="742"/><use href="#o" x="1327" y="742"/>
<rect x="1095" y="578" width="14" height="20" fill="none" stroke="#e6e66a"/><path d="M1095,578l14,20M1109,578l-14,20" stroke="#e6e66a"/><rect x="1095" y="606" width="14" height="23" fill="none" stroke="#e6e66a"/><path d="M1095,606l14,23M1109,606l-14,23" stroke="#e6e66a"/>
<path d="M1090,580v14M1090,610v14" stroke="#e6e66a" stroke-width="2"/>
<path d="M1393,418h25M1393,426h25" stroke="#e6e66a"/>
<rect x="1346" y="789" width="8" height="8" transform="rotate(30 1350 793)" fill="none" stroke="#e6e66a"/>
</g>
<!-- seats -->
<polygon points="1347,590 1402,570 1402,597 1347,607" fill="url(#s)"/>
<polygon points="1347,650 1402,623 1425,801 1375,801" fill="url(#s)"/>
<polygon points="1417,575 1440,570 1440,592 1417,597" fill="url(#s)"/>
<polygon points="1417,621 1440,615 1440,775 1428,801" fill="url(#s)"/>
<g fill="none"><path d="M1346,503V606H1331M1331,652H1346Q1346,720 1378,801M1400,547V598L1417,595V540M1400,620Q1425,720 1424,801M1417,620L1440,612" stroke="#3ec4d4"/>
<path d="M1331,485V720" stroke="#2a6aa8"/><path d="M1326,559H1440M1326,567H1440" stroke="#8a2fa8" stroke-width="1.500"/><path d="M1326,563H1440" stroke="#8a2fa8"/>
<path d="M1330,638L1355,636Q1358,636 1358,630L1359,595Q1360,585 1375,583L1440,571" stroke="#fff" stroke-dasharray="6 3"/>
<circle cx="1352" cy="622" r="11" stroke="#2a6a88"/>
<path d="M1327,687L1372,785L1352,793" stroke="#fff"/>
<path d="M1360,505L1420,495M1410,520L1440,490" stroke="#54c6cc"/>
</g>

<!-- ===== NET A ===== -->
<use href="#ra" x="0" y="374"/><use href="#ra" x="0" y="454"/>
<g fill="none">
<path d="M594,382V428" stroke="#18247a" stroke-width="5"/><path d="M587,382V428M600,382V428M585,382H602M587,428H600M586,435V460M601,435V460M587,462V515M600,462V515M585,462H602M585,515H602" stroke="#efea5c"/>
<path d="M594,462V515" stroke="#18247a" stroke-width="5"/>
<path d="M591,392v25M591,480v25M593,435v25" stroke="#f4f030" stroke-width="3"/>
<rect x="586" y="519" width="14" height="13" stroke="#efea5c"/><path d="M593,515v50" stroke="#2ad42c" stroke-width="4" stroke-dasharray="2 1"/>
<path d="M473,539H589M602,539H721" stroke="#18247a" stroke-width="5"/>
<path d="M473,535H589M473,543H589M602,535H721M602,543H721" stroke="#efea5c"/>
<path d="M472,543V545M462,556V550Q462,535 473,535M470,556V552Q470,543 473,543M733,556V550Q733,535 721,535M727,556V552Q727,543 721,543" stroke="#d07a3a"/>
<path d="M484,538h16M501,538h6M565,538h16M612,538h16M640,538h16M680,538h16" stroke="#f4f030" stroke-width="3"/>
<path d="M487,532v14M520,532v14M537,532v14M548,532v14M572,532v14M610,532v14M632,532v14M641,532v14M654,532v14M721,532v14" stroke="#e8e060"/>
<path d="M463,560V582M470,560V582M729,560V582" stroke="#e8e060"/><path d="M466,560v22M733,560v22" stroke="#18247a" stroke-width="4"/><path d="M464,562v15M728,562v15" stroke="#f4f030" stroke-width="3"/>
<path d="M581,557H607V573H581ZM585,573V580M601,573V580" stroke="#efea5c" stroke-width="1.300"/>
<rect x="580" y="580" width="27" height="15" stroke="#f0f030" stroke-width="2"/><path d="M581,581l25,13M606,581l-25,13" stroke="#f0f030"/>
<path d="M593,595V607" stroke="#2ad42c" stroke-width="2"/>
<rect x="580" y="607" width="28" height="18" fill="#3a1a88" stroke="#f0e070"/><path d="M580,612h28M580,620h28" stroke="#9030c0"/>
<path d="M584,625V665M603,625V665M593,625V660" stroke="#d07a3a"/><path d="M590,627v8M597,627v8" stroke="#2ad42c"/>
<path d="M425,649H587M425,665H603M425,657H590" stroke="#d07a3a"/><path d="M425,657H590" stroke="#2ad42c"/>
<path d="M436,645v24M443,645v24M484,645v24M487,645v24M499,649v16" stroke="#d07a3a"/>
<path d="M438,643v28" stroke="#2ad42c" stroke-width="2" stroke-dasharray="2 1"/>
<path d="M582,649l18,20" stroke="#d07a3a" stroke-dasharray="2 2" stroke-width="2"/>
<!-- left vertical -->
<path d="M462,328V520M470,328V520H462" stroke="#d07a3a"/><path d="M466,370V510" stroke="#2ad42c"/><path d="M466,330V370" stroke="#e8e060" stroke-dasharray="4 2"/>
<path d="M458,310H475M458,322H475M460,310V322M473,310V322" stroke="#d07a3a"/><path d="M459,325l7,7 7,-7M459,350l7,-7 7,7" stroke="#d07a3a"/>
<rect x="460" y="357" width="13" height="11" stroke="#2ad42c"/><path d="M460,357l13,11M473,357l-13,11" stroke="#2ad42c"/>
<path d="M462,390H470M462,395H470M462,450H470M462,456H470M459,456H473" stroke="#d07a3a"/>
<path d="M465,303l2,25M468,303h-6" stroke="#2ad42c"/>
<path d="M418,296H455L467,310M482,296H530M482,296L470,324M487,499H523M487,499L470,515" stroke="#2ad42c"/>
</g>
<rect x="463" y="332" width="8" height="12" fill="#fff"/><rect x="461" y="332" width="12" height="3" fill="#22d022"/><rect x="461" y="342" width="12" height="3" fill="#22d022"/>
<rect x="462" y="372" width="8" height="7" fill="#8020c0"/><rect x="462" y="430" width="8" height="7" fill="#8020c0"/><rect x="462" y="509" width="8" height="8" fill="#8020c0"/>
<use href="#ty" x="543" y="354"/><use href="#ty" x="636" y="354"/><use href="#ty" x="729" y="354"/>
<use href="#ty" x="543" y="435"/><use href="#ty" x="636" y="435"/><use href="#ty" x="729" y="435"/>
<use href="#ty" x="543" y="518"/><use href="#ty" x="636" y="518"/><use href="#ty" x="729" y="518"/>
<use href="#ty" x="466" y="582"/><use href="#ty" x="729" y="584"/>
<g fill="none" stroke="#2ad42c"><path d="M432,339H728M432,335v8M445,337v4M530,337v4M636,334v10M728,334v10M530,317V800M525,317h10M520,355h10M520,435h10M520,513h10"/>
<path d="M477,600L462,578M472,612H508M533,581H572M533,600H572L592,585M533,623H570M578,620L600,610M621,609H652L603,620M622,627H665L605,625M483,632H525L476,660M377,675H412L424,660M392,709H420L460,690M392,756H422L460,770M387,779H422L462,795M495,752H526L480,737M491,766H522L476,737M491,780H522L474,737M483,703H513L518,713M656,780H687L672,772" /></g>
<!-- net C -->
<g fill="none">
<path d="M471,660V712M479,660V712M475,660V712" stroke="#d07a3a"/><path d="M475,655V712" stroke="#2ad42c" stroke-width="5" stroke-dasharray="1 3"/>
<rect x="465" y="713" width="16" height="23" fill="#3a1a88" stroke="#f0f030" stroke-width="2"/><rect x="459" y="683" width="7" height="12" fill="#6a1a80" stroke="#d040c8"/>
<rect x="488" y="714" width="15" height="21" stroke="#f0f030" stroke-width="2"/><path d="M488,714l15,21M503,714l-15,21" stroke="#f0f030"/>
<rect x="507" y="713" width="13" height="23" stroke="#f0f030" stroke-width="2"/><path d="M503,720h4M503,728h4" stroke="#f0f030"/>
<path d="M520,716H535L547,712L558,716H570M570,716H627L637,712L650,716L660,716H726L736,712M520,730H535L547,736L558,730H570L627,730L637,736L650,730H726L736,736" stroke="#d9803a"/>
<path d="M520,723H537M560,723H626M650,723H735" stroke="#2ad42c"/>
<path d="M546,678V712M553,678V712M546,736V776M553,736V776M639,678V712M646,678V712M639,736V776M646,736V776M733,678V712M739,678V712M733,736V776M739,736V776" stroke="#d9803a"/>
<path d="M549,678V712M549,736V776M642,678V712M642,736V776M736,678V712M736,736V776" stroke="#2ad42c"/>
<path d="M545,709h9M545,738h9M638,709h9M638,738h9M732,709h9M732,738h9" stroke="#2ad42c" stroke-width="2"/>
<circle cx="549" cy="723" r="13" stroke="#d9803a"/><circle cx="642" cy="723" r="12" stroke="#d9803a"/>
<path d="M560,716v14M572,716v14M586,712v20M662,712v20M665,712v20M669,712v20" stroke="#d9803a"/>
<path d="M560,676H778M778,676v-3M722,682V800M717,682h10M717,768h10" stroke="#2ad42c"/>
<path d="M431,662V680M433,660v18" stroke="#2ad42c"/><path d="M432,672H453M432,668v8M453,668v8" stroke="#e8e8e8" stroke-width=".7"/>
<path d="M460,775l-4,10 -10,5v10h16V785z" stroke="#d07a3a" stroke-width="1.500"/><path d="M425,789H460M425,795H460" stroke="#d07a3a" stroke-width="2"/>
<path d="M460,745V760" stroke="#2ad42c" stroke-width="2"/><rect x="456" y="739" width="10" height="11" stroke="#2ad42c"/>
</g>
<rect x="456" y="763" width="9" height="11" fill="#fff"/><rect x="455" y="764" width="11" height="3" fill="#22c022"/>
<g><use href="#tw" x="549" y="682"/><use href="#tw" x="642" y="682"/><use href="#tw" x="736" y="682"/><use href="#tw" x="549" y="774"/><use href="#tw" x="642" y="774"/><use href="#tw" x="736" y="774"/></g>

<!-- ===== NET D ===== -->
<use href="#rd" transform="translate(822,577)"/>
<use href="#rd" transform="translate(822,628) scale(1,-1)"/>
<use href="#rd" transform="translate(822,691) scale(1,-1)"/>
<use href="#rd" transform="translate(822,765) scale(1,-1)"/>
<g fill="none">
<path d="M966,558V575L963,590H967V640L965,650V690M984,558V575L987,590H982V640L985,650V690M975,555V765" stroke="#d9803a"/>
<path d="M975,555V690" stroke="#2ad42c" stroke-width="1"/>
<path d="M968,690V757M982,690V757M970,757V765M975,690V765" stroke="#d9803a"/>
<rect x="964" y="570" width="22" height="17" rx="5" stroke="#d9803a"/><rect x="964" y="620" width="22" height="17" rx="5" stroke="#d9803a"/><rect x="964" y="683" width="22" height="17" rx="5" stroke="#d9803a"/>
<path d="M987,585q5,0 5,-15M987,573q3,0 3,-8M985,622q8,0 8,16M985,632q3,0 3,6M985,685q8,0 8,16M985,695q3,0 3,6M985,760q8,0 8,16M985,768q3,0 3,6" stroke="#d9803a"/>
<path d="M985,620v10M985,685v10" stroke="#f08020" stroke-width="3"/>
<rect x="961" y="494" width="25" height="15" fill="#3a1a88" stroke="#f0e070" stroke-width="1.300"/><path d="M961,499h25M961,504h25" stroke="#8a30c0"/>
<rect x="961" y="519" width="26" height="15" stroke="#f0f030" stroke-width="2"/><path d="M961,519l26,15M987,519l-26,15" stroke="#f0f030"/>
<rect x="961" y="538" width="26" height="15" stroke="#f0f030" stroke-width="1.300"/><path d="M966,534v4M981,534v4" stroke="#f0f030" stroke-width="2"/>
<path d="M966,483H984M966,490H984M970,483V494M980,483V494M975,472V494M970,477H980" stroke="#d9803a"/>
<path d="M961,490h25" stroke="#2ad42c" stroke-width="2" stroke-dasharray="2 1"/><path d="M975,509v10" stroke="#2ad42c" stroke-width="3"/>
<path d="M798,483H813V490L825,498H897V506H825L813,508H798Z" stroke="#d9803a" stroke-width="1.500"/>
<path d="M798,496H813M803,483V508M809,483V508M825,498v8M831,498v8M838,498v8M850,498V506M862,498V506M875,498V506" stroke="#d9803a"/>
<path d="M804,472v12M800,476h8" stroke="#2ad42c"/>
<rect x="860" y="496" width="12" height="12" rx="2" stroke="#2ad42c"/><path d="M862,500q4,3 8,0M862,504q4,-3 8,0" stroke="#2ad42c"/>
<path d="M808,480L820,464H854M845,509H847M847,521H878L889,502M921,472H955L972,482M920,500H950L973,504M996,522H1026L986,503M920,526H950L961,527M994,542H1025L987,534M920,544H950L961,542M857,479H887L843,500" stroke="#2ad42c"/>
<path d="M908,486h7M908,502h7M912,486V502M901,503h14" stroke="#e8e8e8" stroke-width=".8"/>
<path d="M807,562V800M802,562h10M802,646h10M802,708h10M802,782h10M822,725H1033M822,721v8M907,721v8M992,721v8M1033,716v14" stroke="#2ad42c"/>
<path d="M1047,742H1030V760H1047M1030,760H1070M1058,721H1085L1090,790M1051,734H1080L1088,760" stroke="#2ad42c"/>
<path d="M1047,754H1075V766H1047Z" stroke="#d07a3a" stroke-width="1.300"/><rect x="1075" y="752" width="10" height="15" stroke="#e8ea60" stroke-width="2"/><path d="M1088,755H1092V768H1088Z" fill="#eee"/>
<path d="M1090,755V800M1094,755V800" stroke="#d07a3a"/>
<rect x="1037" y="783" width="8" height="11" stroke="#a030b0"/>
</g>
<rect x="838" y="497" width="8" height="9" fill="#fff"/><rect x="832" y="497" width="5" height="9" fill="#22d022"/><rect x="846" y="497" width="5" height="9" fill="#22d022"/>
<rect x="886" y="497" width="9" height="10" fill="#6a1a90" stroke="#c040c0"/>
<g><use href="#tw" x="822" y="561"/><use href="#tw" x="907" y="561"/><use href="#tw" x="992" y="561"/><use href="#tw" x="822" y="646"/><use href="#tw" x="907" y="646"/><use href="#tw" x="992" y="646"/><use href="#tw" x="822" y="708"/><use href="#tw" x="907" y="708"/><use href="#tw" x="992" y="708"/><use href="#tw" x="822" y="782"/><use href="#tw" x="907" y="782"/><use href="#tw" x="992" y="782"/><use href="#tw" x="1053" y="760"/></g>

<!-- ===== NET E ===== -->
<use href="#re" transform="translate(1147,521)"/>
<use href="#re" transform="translate(1147,600)"/>
<use href="#re" transform="translate(1147,678)"/>
<use href="#re" transform="translate(1147,748)"/>
<g fill="none">
<path d="M1262,525V590M1272,525V590M1263,610V665M1273,610V665M1263,690V735M1273,690V735M1267,525V760" stroke="#d9803a"/>
<path d="M1267,540V760" stroke="#2ad42c" stroke-width=".8"/>
<path d="M1260,516l7,8 7,-8M1274,517H1300Q1308,517 1308,505M1274,525H1302Q1312,525 1312,505" stroke="#d9803a"/>
<path d="M1258,594H1278V606H1258ZM1258,672H1278V684H1258ZM1258,742H1278V754H1258Z" stroke="#d9803a"/>
<path d="M1278,596H1285Q1292,596 1292,584M1278,604H1288Q1296,604 1296,584M1278,674H1285Q1292,674 1292,662M1278,682H1288Q1296,682 1296,662M1278,744H1285Q1292,744 1292,732M1278,752H1288Q1296,752 1296,732" stroke="#d9803a"/>
<path d="M1278,594v12M1278,672v12M1278,742v12" stroke="#2ad42c" stroke-width="3" stroke-dasharray="2 1"/>
<rect x="1257" y="760" width="23" height="13" stroke="#f0f030" stroke-width="1.500"/><rect x="1257" y="777" width="21" height="15" stroke="#f0f030" stroke-width="2"/><path d="M1257,777l21,15M1278,777l-21,15" stroke="#f0f030"/>
<path d="M1262,773v4M1274,773v4M1262,795H1278" stroke="#f0f030"/>
<path d="M1306,534V731M1296,534h10M1295,583h10M1295,662h10M1295,731h10M1147,649H1318M1147,644v10M1217,644v10M1288,644v10" stroke="#2ad42c"/>
<path d="M1171,568H1201L1214,578M1194,780H1232L1257,760M1288,773H1317L1280,765M1287,785H1317L1278,785M1288,799H1317M1255,499H1286L1305,495M1277,453H1307V475M1327,400H1440M1327,390v20M1355,395v10M1431,395v10M1362,375v-15M1328,395V360M1382,333v10M1392,333v10M1379,335h15M1387,375V340" stroke="#2ad42c"/>
<path d="M1306,460V507M1314,460V507M1310,470V507" stroke="#d07a3a"/>
<path d="M1305,497h13" stroke="#2ad42c" stroke-width="3" stroke-dasharray="2 1"/>
<path d="M1350,380H1440M1350,386H1440M1375,373v20M1380,373v20M1390,373v20M1395,373v20" stroke="#d07a3a"/>
<path d="M1355,507V530L1370,550H1440M1365,507V525L1375,540H1440M1400,510V545M1405,510V545M1420,510V545" stroke="#d07a3a"/>
<path d="M1360,510V535H1440" stroke="#2ad42c"/>
</g>
<g><use href="#tw" x="1147" y="505"/><use href="#tw" x="1217" y="505"/><use href="#tw" x="1288" y="505"/><use href="#tw" x="1147" y="583"/><use href="#tw" x="1217" y="583"/><use href="#tw" x="1288" y="583"/><use href="#tw" x="1147" y="662"/><use href="#tw" x="1217" y="662"/><use href="#tw" x="1288" y="662"/><use href="#tw" x="1147" y="732"/><use href="#tw" x="1217" y="732"/><use href="#tw" x="1288" y="732"/><use href="#tw" x="1309" y="469"/><use href="#tw" x="1355" y="511"/><use href="#tw" x="1409" y="511"/><use href="#tw" x="1379" y="342"/><use href="#tw" x="1354" y="381"/><use href="#tw" x="1430" y="381"/></g>

<!-- crosshair -->
<path d="M374,792H406M414,792H447M410,757V788M410,796V801" stroke="#fff"/><rect x="406" y="788" width="8" height="8" fill="none" stroke="#fff"/>

<!-- TEXT -->
<g>
<text class="g" x="421" y="294" textLength="34" lengthAdjust="spacingAndGlyphs">FYDY-1-5</text><text class="g" x="458" y="295" style="font-size:9px">排风</text>
<text class="g" x="485" y="294" textLength="30" lengthAdjust="spacingAndGlyphs">PFJ-1-2</text>
<text class="w" x="443" y="337" textLength="14" lengthAdjust="spacingAndGlyphs" style="font-size:9px">2380</text>
<text class="w" x="499" y="337" textLength="13" lengthAdjust="spacingAndGlyphs" style="font-size:9px">3480</text>
<text class="w" x="584" y="337" textLength="13" lengthAdjust="spacingAndGlyphs" style="font-size:9px">6500</text>
<text class="w" x="676" y="337" textLength="13" lengthAdjust="spacingAndGlyphs" style="font-size:9px">6500</text>
<text class="w" transform="translate(529 342) rotate(-90)" textLength="14" lengthAdjust="spacingAndGlyphs" style="font-size:9px">2300</text>
<text class="w" transform="translate(529 400) rotate(-90)" textLength="14" lengthAdjust="spacingAndGlyphs" style="font-size:9px">5500</text>
<text class="w" transform="translate(529 480) rotate(-90)" textLength="14" lengthAdjust="spacingAndGlyphs" style="font-size:9px">5200</text>
<text class="w" transform="translate(529 570) rotate(-90)" textLength="14" lengthAdjust="spacingAndGlyphs" style="font-size:9px">7200</text>
<text class="r" x="552" y="389" textLength="31" lengthAdjust="spacingAndGlyphs">500X160</text>
<text class="g" x="619" y="390" textLength="33" lengthAdjust="spacingAndGlyphs">500X200</text>
<text class="g" x="673" y="390" textLength="31" lengthAdjust="spacingAndGlyphs">500X160</text>
<text class="r" x="551" y="468" textLength="33" lengthAdjust="spacingAndGlyphs">500X160</text>
<text class="g" x="619" y="469" textLength="33" lengthAdjust="spacingAndGlyphs">500X200</text>
<text class="g" x="673" y="469" textLength="31" lengthAdjust="spacingAndGlyphs">500X160</text>
<text class="r" x="478" y="552" textLength="32" lengthAdjust="spacingAndGlyphs">500X160</text>
<text class="r" x="541" y="552" textLength="32" lengthAdjust="spacingAndGlyphs">500X200</text>
<text class="g" x="623" y="554" textLength="33" lengthAdjust="spacingAndGlyphs">630X200</text>
<text class="g" x="671" y="552" textLength="32" lengthAdjust="spacingAndGlyphs">500X200</text>
<text class="g" transform="translate(459 388) rotate(-90)" textLength="33" lengthAdjust="spacingAndGlyphs">630X200</text>
<text class="g" transform="translate(461 437) rotate(-90)" textLength="31" lengthAdjust="spacingAndGlyphs">400X200</text>
<text class="g" transform="translate(460 498) rotate(-90)" textLength="30" lengthAdjust="spacingAndGlyphs">400X160</text>
<text class="r" transform="translate(482 585) rotate(-90)" textLength="30" lengthAdjust="spacingAndGlyphs">500X160</text>
<text class="r" transform="translate(598 425) rotate(-90)" textLength="30" lengthAdjust="spacingAndGlyphs">500X160</text>
<text class="r" transform="translate(598 505) rotate(-90)" textLength="30" lengthAdjust="spacingAndGlyphs">500X160</text>
<text class="g" transform="translate(745 539) rotate(-90)" textLength="31" lengthAdjust="spacingAndGlyphs">500X160</text>
<text class="g" transform="translate(745 580) rotate(-90)" textLength="30" lengthAdjust="spacingAndGlyphs">500X160</text>
<text class="g" x="488" y="496" textLength="30" lengthAdjust="spacingAndGlyphs">PFK-1-2</text><text class="g" x="497" y="507" style="font-size:8px">消声</text>
<text class="g" x="535" y="579" textLength="37" lengthAdjust="spacingAndGlyphs">JYX-1-4</text>
<text class="g" x="533" y="598" textLength="39" lengthAdjust="spacingAndGlyphs">KTJ-1-3</text>
<text class="g" x="477" y="603" textLength="31" lengthAdjust="spacingAndGlyphs">SFK-1-3</text><text class="g" x="484" y="612" style="font-size:8px">消声</text>
<text class="g" x="621" y="608" textLength="31" lengthAdjust="spacingAndGlyphs">HFK-1-3</text>
<text class="g" x="622" y="625" textLength="43" lengthAdjust="spacingAndGlyphs">FHTJF-1-2</text>
<text class="g" x="533" y="622" textLength="37" lengthAdjust="spacingAndGlyphs">JYX-1-4</text>
<text class="g" x="483" y="631" textLength="42" lengthAdjust="spacingAndGlyphs">FHTJF-1-1</text>
<text class="g" x="398" y="662" style="font-size:9px">新风</text>
<text class="g" x="377" y="674" textLength="35" lengthAdjust="spacingAndGlyphs">FYBY-1-7</text>
<text class="w" x="441" y="671" textLength="12" lengthAdjust="spacingAndGlyphs" style="font-size:9px">2000</text>
<text class="g" x="441" y="661" textLength="28" lengthAdjust="spacingAndGlyphs">1250X500</text>
<text class="g" x="521" y="661" textLength="38" lengthAdjust="spacingAndGlyphs">1250X320</text>
<text class="g" x="392" y="708" textLength="28" lengthAdjust="spacingAndGlyphs">PFK-1-1</text>
<text class="g" x="483" y="701" textLength="30" lengthAdjust="spacingAndGlyphs">JYX-1-3</text>
<text class="g" transform="translate(457 730) rotate(-90)" textLength="28" lengthAdjust="spacingAndGlyphs">400X160</text>
<text class="g" transform="translate(478 705) rotate(-90)" textLength="40" lengthAdjust="spacingAndGlyphs">630X250</text>
<text class="g" x="522" y="728" textLength="33" lengthAdjust="spacingAndGlyphs">1250X250</text>
<text class="g" transform="translate(566 705) rotate(-90)" textLength="28" lengthAdjust="spacingAndGlyphs">500X160</text>
<text class="g" transform="translate(632 705) rotate(-90)" textLength="28" lengthAdjust="spacingAndGlyphs">500X160</text>
<text class="g" transform="translate(752 708) rotate(-90)" textLength="28" lengthAdjust="spacingAndGlyphs">500X160</text>
<text class="g" transform="translate(566 772) rotate(-90)" textLength="27" lengthAdjust="spacingAndGlyphs">500X160</text>
<text class="g" transform="translate(632 767) rotate(-90)" textLength="28" lengthAdjust="spacingAndGlyphs">500X160</text>
<text class="g" transform="translate(752 765) rotate(-90)" textLength="27" lengthAdjust="spacingAndGlyphs">500X160</text>
<text class="g" x="588" y="717" textLength="28" lengthAdjust="spacingAndGlyphs">800X250</text>
<text class="g" x="680" y="717" textLength="28" lengthAdjust="spacingAndGlyphs">500X200</text>
<text class="w" x="577" y="675" textLength="13" lengthAdjust="spacingAndGlyphs" style="font-size:9px">6600</text>
<text class="w" x="683" y="675" textLength="12" lengthAdjust="spacingAndGlyphs" style="font-size:9px">6600</text>
<text class="w" x="751" y="675" textLength="12" lengthAdjust="spacingAndGlyphs" style="font-size:9px">3000</text>
<text class="w" transform="translate(721 744) rotate(-90)" textLength="13" lengthAdjust="spacingAndGlyphs" style="font-size:9px">6000</text>
<text class="w" transform="translate(721 796) rotate(-90)" textLength="13" lengthAdjust="spacingAndGlyphs" style="font-size:9px">3000</text>
<text class="g" x="495" y="750" textLength="31" lengthAdjust="spacingAndGlyphs">KTJ-1-2</text>
<text class="g" x="491" y="765" textLength="31" lengthAdjust="spacingAndGlyphs">HFK-1-2</text>
<text class="g" x="491" y="779" textLength="31" lengthAdjust="spacingAndGlyphs">JYX-1-3</text>
<text class="g" x="392" y="755" textLength="30" lengthAdjust="spacingAndGlyphs">PFJ-1-1</text>
<text class="g" x="387" y="778" textLength="35" lengthAdjust="spacingAndGlyphs">FYBY-1-2</text>
<text class="g" x="656" y="779" textLength="31" lengthAdjust="spacingAndGlyphs">SFK-1-2</text><text class="g" x="664" y="790" style="font-size:8px">消声</text>
<!-- D -->
<text class="g" x="795" y="470" style="font-size:9px">排风</text>
<text class="g" x="820" y="463" textLength="34" lengthAdjust="spacingAndGlyphs">FYBY-1-6</text>
<text class="g" x="857" y="477" textLength="30" lengthAdjust="spacingAndGlyphs">PFJ-1-3</text>
<text class="g" x="856" y="496" textLength="35" lengthAdjust="spacingAndGlyphs">500X160</text>
<text class="g" x="788" y="506" textLength="34" lengthAdjust="spacingAndGlyphs">900X200</text>
<text class="g" x="847" y="519" textLength="31" lengthAdjust="spacingAndGlyphs">PFK-1-3</text>
<text class="w" transform="translate(911 502) rotate(-90)" textLength="14" lengthAdjust="spacingAndGlyphs" style="font-size:9px">1000</text>
<text class="g" x="921" y="472" textLength="34" lengthAdjust="spacingAndGlyphs">FYBY-1-8</text>
<text class="g" x="966" y="469" style="font-size:9px">新风</text>
<text class="g" x="920" y="499" textLength="30" lengthAdjust="spacingAndGlyphs">JYX-1-5</text>
<text class="g" x="996" y="521" textLength="30" lengthAdjust="spacingAndGlyphs">HFK-1-4</text>
<text class="g" x="920" y="525" textLength="30" lengthAdjust="spacingAndGlyphs">KTJ-1-4</text>
<text class="g" x="994" y="541" textLength="31" lengthAdjust="spacingAndGlyphs">KTJ-1-4</text>
<text class="g" x="920" y="543" textLength="30" lengthAdjust="spacingAndGlyphs">JYX-1-5</text>
<text class="g" transform="translate(979 587) rotate(-90)" textLength="34" lengthAdjust="spacingAndGlyphs">500X250</text>
<text class="g" transform="translate(979 640) rotate(-90)" textLength="30" lengthAdjust="spacingAndGlyphs">500X250</text>
<text class="g" transform="translate(979 682) rotate(-90)" textLength="34" lengthAdjust="spacingAndGlyphs">1400X200</text>
<text class="g" transform="translate(968 753) rotate(-90)" textLength="31" lengthAdjust="spacingAndGlyphs">500X200</text>
<text class="g" transform="translate(1007 578) rotate(-90)" textLength="26" lengthAdjust="spacingAndGlyphs">400X120</text>
<text class="g" transform="translate(1007 655) rotate(-90)" textLength="24" lengthAdjust="spacingAndGlyphs">400X120</text>
<text class="g" transform="translate(1007 717) rotate(-90)" textLength="27" lengthAdjust="spacingAndGlyphs">400X120</text>
<text class="g" transform="translate(1007 791) rotate(-90)" textLength="26" lengthAdjust="spacingAndGlyphs">400X120</text>
<text class="g" transform="translate(921 797) rotate(-90)" textLength="27" lengthAdjust="spacingAndGlyphs">400X120</text>
<text class="g" transform="translate(1104 792) rotate(-90)" textLength="27" lengthAdjust="spacingAndGlyphs">400X120</text>
<text class="g" x="840" y="592" textLength="28" lengthAdjust="spacingAndGlyphs">400X120</text><text class="g" x="922" y="592" textLength="28" lengthAdjust="spacingAndGlyphs">400X200</text>
<text class="g" x="840" y="624" textLength="28" lengthAdjust="spacingAndGlyphs">400X120</text><text class="g" x="922" y="624" textLength="28" lengthAdjust="spacingAndGlyphs">400X200</text>
<text class="g" x="840" y="686" textLength="28" lengthAdjust="spacingAndGlyphs">400X120</text><text class="g" x="922" y="686" textLength="28" lengthAdjust="spacingAndGlyphs">400X200</text>
<text class="g" x="840" y="760" textLength="28" lengthAdjust="spacingAndGlyphs">400X120</text><text class="g" x="922" y="760" textLength="28" lengthAdjust="spacingAndGlyphs">400X200</text>
<text class="w" x="848" y="724" textLength="13" lengthAdjust="spacingAndGlyphs" style="font-size:9px">6000</text>
<text class="w" x="943" y="724" textLength="13" lengthAdjust="spacingAndGlyphs" style="font-size:9px">6000</text>
<text class="w" x="1005" y="724" textLength="14" lengthAdjust="spacingAndGlyphs" style="font-size:9px">2830</text>
<text class="w" transform="translate(807 610) rotate(-90)" textLength="14" lengthAdjust="spacingAndGlyphs" style="font-size:9px">6000</text>
<text class="w" transform="translate(807 684) rotate(-90)" textLength="14" lengthAdjust="spacingAndGlyphs" style="font-size:9px">1400</text>
<text class="w" transform="translate(807 752) rotate(-90)" textLength="14" lengthAdjust="spacingAndGlyphs" style="font-size:9px">5200</text>
<text class="w" transform="translate(807 800) rotate(-90)" textLength="14" lengthAdjust="spacingAndGlyphs" style="font-size:9px">2000</text>
<text class="g" x="1058" y="720" textLength="28" lengthAdjust="spacingAndGlyphs">HOR-1-1</text>
<text class="g" x="1051" y="733" textLength="25" lengthAdjust="spacingAndGlyphs">PG-4-1</text>
<text class="w" x="1062" y="749" textLength="12" lengthAdjust="spacingAndGlyphs" style="font-size:9px">2100</text>
<text class="w" transform="translate(1027 758) rotate(-90)" textLength="14" lengthAdjust="spacingAndGlyphs" style="font-size:9px">1231</text>
<text class="g" x="830" y="794" textLength="30" lengthAdjust="spacingAndGlyphs">SFK-1-4</text>
<text class="g" x="1042" y="801" textLength="30" lengthAdjust="spacingAndGlyphs">HOR-1-2</text>
<text class="w" transform="translate(1112 504) rotate(-90)" style="font-size:10px">FMZ</text>
<text class="w" transform="translate(1088 550) rotate(-90)" style="font-size:10px">FMZ</text>
<!-- right top -->
<text class="w" x="1333" y="366" style="font-size:10px">FM乙</text>
<text class="w" transform="translate(1337 378) rotate(-90)" textLength="14" lengthAdjust="spacingAndGlyphs" style="font-size:9px">1500</text>
<text class="g" x="1342" y="375" textLength="26" lengthAdjust="spacingAndGlyphs">400X160</text>
<text class="g" x="1387" y="376" textLength="36" lengthAdjust="spacingAndGlyphs">500X160</text>
<text class="g" transform="translate(1376 365) rotate(-90)" textLength="25" lengthAdjust="spacingAndGlyphs">400X160</text>
<text class="w" x="1382" y="332" textLength="10" lengthAdjust="spacingAndGlyphs" style="font-size:9px">500</text>
<text class="w" transform="translate(1397 354) rotate(-90)" textLength="12" lengthAdjust="spacingAndGlyphs" style="font-size:9px">1000</text>
<text class="g" x="1412" y="349" textLength="23" lengthAdjust="spacingAndGlyphs">FHTJF</text>
<text class="w" x="1334" y="398" textLength="12" lengthAdjust="spacingAndGlyphs" style="font-size:9px">2001</text>
<text class="w" x="1386" y="398" textLength="13" lengthAdjust="spacingAndGlyphs" style="font-size:9px">5400</text>
<text class="w" transform="translate(1317 411) rotate(-90)" style="font-size:10px">FMZ</text>
<text class="g" x="1277" y="451" textLength="30" lengthAdjust="spacingAndGlyphs">SFK-1-6</text><text class="g" x="1285" y="462" style="font-size:8px">消声</text>
<text class="w" x="1279" y="486" style="font-size:10px">FM乙</text>
<text class="g" x="1255" y="498" textLength="31" lengthAdjust="spacingAndGlyphs">FHTJF-1-3</text>
<text class="w" transform="translate(1304 504) rotate(-90)" textLength="14" lengthAdjust="spacingAndGlyphs" style="font-size:9px">1231</text>
<text class="g" transform="translate(1321 507) rotate(-90)" textLength="34" lengthAdjust="spacingAndGlyphs">320X160</text>
<text class="g" x="1159" y="516" textLength="33" lengthAdjust="spacingAndGlyphs">320X120</text>
<text class="g" x="1225" y="516" textLength="32" lengthAdjust="spacingAndGlyphs">320X160</text>
<text class="g" x="1272" y="534" textLength="33" lengthAdjust="spacingAndGlyphs">320X200</text>
<text class="g" transform="translate(1263 572) rotate(-90)" textLength="32" lengthAdjust="spacingAndGlyphs">500X200</text>
<text class="g" x="1171" y="567" textLength="30" lengthAdjust="spacingAndGlyphs">SFK-1-5</text><text class="g" x="1178" y="576" style="font-size:8px">消声</text>
<text class="g" x="1156" y="612" textLength="33" lengthAdjust="spacingAndGlyphs">320X120</text>
<text class="g" x="1218" y="612" textLength="33" lengthAdjust="spacingAndGlyphs">320X160</text>
<text class="g" x="1274" y="613" textLength="33" lengthAdjust="spacingAndGlyphs">320X120</text>
<text class="g" transform="translate(1263 640) rotate(-90)" textLength="32" lengthAdjust="spacingAndGlyphs">630X250</text>
<text class="w" x="1176" y="647" textLength="13" lengthAdjust="spacingAndGlyphs" style="font-size:9px">5000</text>
<text class="w" x="1247" y="647" textLength="13" lengthAdjust="spacingAndGlyphs" style="font-size:9px">5000</text>
<text class="w" x="1297" y="647" textLength="12" lengthAdjust="spacingAndGlyphs" style="font-size:9px">2100</text>
<text class="g" x="1156" y="692" textLength="33" lengthAdjust="spacingAndGlyphs">320X120</text>
<text class="g" x="1216" y="692" textLength="33" lengthAdjust="spacingAndGlyphs">320X160</text>
<text class="g" x="1275" y="692" textLength="32" lengthAdjust="spacingAndGlyphs">320X120</text>
<text class="g" transform="translate(1259 725) rotate(-90)" textLength="33" lengthAdjust="spacingAndGlyphs">800X250</text>
<text class="g" x="1156" y="761" textLength="33" lengthAdjust="spacingAndGlyphs">320X120</text>
<text class="g" x="1218" y="763" textLength="33" lengthAdjust="spacingAndGlyphs">320X160</text>
<text class="g" x="1280" y="761" textLength="32" lengthAdjust="spacingAndGlyphs">320X120</text>
<text class="g" x="1194" y="779" textLength="38" lengthAdjust="spacingAndGlyphs">1000X250</text>
<text class="g" x="1288" y="772" textLength="29" lengthAdjust="spacingAndGlyphs">JYX-1-3</text>
<text class="g" x="1287" y="784" textLength="30" lengthAdjust="spacingAndGlyphs">KTJ-1-2</text>
<text class="g" x="1288" y="798" textLength="29" lengthAdjust="spacingAndGlyphs">JYX-1-3</text>
<text class="g" x="1352" y="556" textLength="39" lengthAdjust="spacingAndGlyphs">630X250</text>
<text class="g" x="1401" y="556" textLength="38" lengthAdjust="spacingAndGlyphs">630X320</text>
<text class="g" transform="translate(1349 537) rotate(-90)" textLength="34" lengthAdjust="spacingAndGlyphs">630X250</text>
<text class="g" transform="translate(1402 530) rotate(-90)" textLength="27" lengthAdjust="spacingAndGlyphs">630X250</text>
<text class="w" x="1376" y="518" textLength="13" lengthAdjust="spacingAndGlyphs" style="font-size:9px">3751</text>
<text class="w" x="1430" y="518" textLength="13" lengthAdjust="spacingAndGlyphs" style="font-size:9px">3751</text>
<text class="w" transform="translate(1317 553) rotate(-90)" textLength="14" lengthAdjust="spacingAndGlyphs" style="font-size:9px">5500</text>
<text class="w" transform="translate(1305 629) rotate(-90)" textLength="14" lengthAdjust="spacingAndGlyphs" style="font-size:9px">5500</text>
<text class="w" transform="translate(1305 704) rotate(-90)" textLength="14" lengthAdjust="spacingAndGlyphs" style="font-size:9px">5000</text>
<text class="w" transform="translate(1324 632) rotate(-90)" style="font-size:10px">FM乙</text>
</g>

<!-- nav bar overlay -->
<rect x="1403" y="339" width="31" height="193" rx="3" fill="#c8c8c8" fill-opacity=".42"/>
<g fill="none" stroke="#9aa0a4" stroke-opacity=".5"><rect x="1409" y="358" width="20" height="18" rx="3"/><path d="M1412,405l12,14M1412,440l7,-8 7,8M1419,432v20M1412,475l7,-12 7,12M1415,490h8"/></g>
<!-- nav cube -->
<circle cx="1361" cy="215" r="50" fill="none" stroke="#46525c" stroke-width="14"/>
<rect x="1337" y="191" width="48" height="48" fill="#a3a6a8"/><rect x="1345" y="200" width="31" height="30" fill="#85898b"/>
<g fill="#9aa0a2">
<text x="1352" y="170" style="font-size:18px">北</text><text x="1352" y="275" style="font-size:18px">南</text><text x="1299" y="223" style="font-size:18px">西</text><text x="1404" y="223" style="font-size:18px">东</text></g>
<text x="1351" y="223" style="font-size:20px" fill="#3a3f42">上</text>
<rect x="1332" y="297" width="57" height="16" rx="3" fill="#8d9196"/><text x="1342" y="309" fill="#a6a9ac" style="font-size:11px">未命名</text>
</g>
</svg>

<!-- status tabs -->
<div style="left:261px;top:801px;width:1179px;height:17px;background:#ece9d8"></div>
<div style="left:231px;top:818px;width:1209px;height:4px;background:#6e6e68"></div>
<div class="t" style="left:270px;top:802px">首层(3.3m):0~3.3</div>
<svg width="10" height="10" style="left:407px;top:807px"><path d="M1,3h6l-3,4z" fill="#111"/></svg>
<div class="tab on" style="left:430px;width:30px">着色</div>
<div class="tab on" style="left:471px;width:30px">正交</div>
<div class="tab" style="left:512px;width:30px">极轴</div>
<div class="tab on" style="left:553px;width:54px">对象捕捉</div>
<div class="tab on" style="left:617px;width:56px">对象追踪</div>
<div class="tab" style="left:684px;width:51px">组合开关</div>
<div class="tab on" style="left:747px;width:55px">底图开关</div>
<svg width="10" height="10" style="left:1428px;top:807px"><path d="M1,3h6l-3,4z" fill="#111"/></svg>

<!-- command -->
<div style="left:231px;top:822px;width:14px;height:56px;background:#a0a0a0"></div>
<div style="left:233px;top:825px;width:10px;height:3px;border-top:1px dotted #eee;border-bottom:1px dotted #eee"></div>
<div style="left:245px;top:822px;width:1195px;height:55px;background:#fff"></div>
<div style="left:245px;top:859px;width:1195px;height:1px;background:#bbb"></div>
<div style="left:231px;top:877px;width:1209px;height:1px;background:#111"></div>
<div class="t" style="left:248px;top:823px;font-family:'Liberation Mono','WenQuanYi Zen Hei',monospace;letter-spacing:1.1px">命令:</div>
<div class="t" style="left:248px;top:838px;font-family:'Liberation Mono','WenQuanYi Zen Hei',monospace;letter-spacing:1.1px">选择单选识别需要的风管的边线&lt;退出&gt;或[单回路识别(S)/回路识别(O)/立管识别(I)/过滤选择(Y)/回退(H)]:</div>
<div class="t" style="left:248px;top:863px;font-family:'Liberation Mono','WenQuanYi Zen Hei',monospace;letter-spacing:1.1px">命令:</div>
<div style="left:1425px;top:859px;width:15px;height:18px;background:#ece9d8"></div>
<div style="left:1424px;top:823px;width:16px;height:36px;background:#f6f6f2"></div>
<svg width="100" height="70" style="left:1358px;top:820px">
<rect x="66" y="5" width="14" height="14" rx="2" fill="#c3d2f0" stroke="#9ab"/><path d="M69,14l4,-4 4,4" fill="none" stroke="#223a70" stroke-width="2"/>
<rect x="66" y="26" width="14" height="13" rx="2" fill="#c3d2f0" stroke="#9ab"/><path d="M69,30l4,4 4,-4" fill="none" stroke="#223a70" stroke-width="2"/>
<rect x="0" y="42" width="13" height="14" rx="2" fill="#c3d2f0" stroke="#9ab"/><path d="M8,45l-4,4 4,4" fill="none" stroke="#223a70" stroke-width="2"/>
<rect x="15" y="42" width="16" height="14" rx="2" fill="#d6e0f6" stroke="#9ab"/><path d="M20,46v6M23,46v6M26,46v6" stroke="#678"/>
<rect x="49" y="42" width="14" height="14" rx="2" fill="#c3d2f0" stroke="#9ab"/><path d="M53,45l4,4 -4,4" fill="none" stroke="#223a70" stroke-width="2"/>
</svg>

<!-- status bar -->
<div style="left:0;top:878px;width:1440px;height:19px;background:linear-gradient(#5a5a5a,#a6a6a6)"></div>
<div style="left:0;top:897px;width:1440px;height:3px;background:#3a6ea5"></div>
<div class="t" style="left:7px;top:883px;font:10px/14px 'Liberation Mono',monospace;color:#111">AutoCAD 2011</div>
<div class="t" style="left:91px;top:883px;font:10px/14px 'Liberation Mono',monospace;color:#111">-24833, 2576 , 0</div>
<svg width="90" height="22" style="left:1350px;top:878px">
<rect x="8" y="2" width="41" height="17" fill="#9a9a9a" stroke="#333"/>
<path d="M11,5h10l3,3v9h-13z" fill="#e8d44a" stroke="#333"/><path d="M18,14l3,3 6,-7" fill="none" stroke="#2aa040" stroke-width="2"/>
<path d="M32,8a5,5 0 0 1 10,0q0,3 -3,6v3h-4v-3q-3,-3 -3,-6z" fill="#f6e7a8" stroke="#998"/>
<rect x="56" y="2" width="11" height="17" fill="#c8c8c8"/><path d="M59,9h5l-2.500,3z" fill="#111"/>
<rect x="70" y="3" width="15" height="15" fill="#ececec" stroke="#222"/><path d="M70,6h15" stroke="#222"/>
</svg>

<!-- cursor -->
<svg width="20" height="24" style="left:444px;top:801px"><path d="M2,2V19L6,15L9,22L12,21L9,14H15Z" fill="#fff" stroke="#000"/></svg>
</body></html>
